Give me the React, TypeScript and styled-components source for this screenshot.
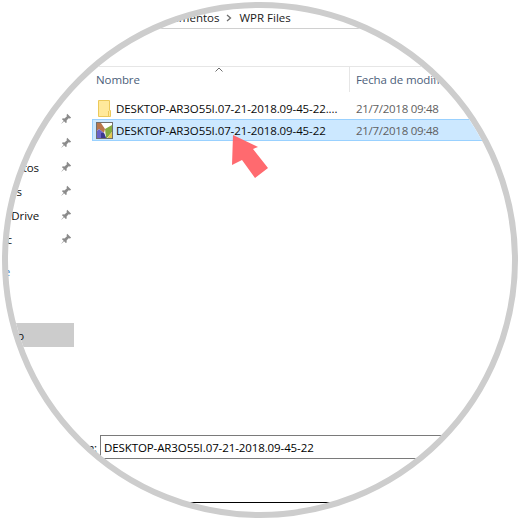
import React from "react";
import styled, { createGlobalStyle } from "styled-components";

const Global = createGlobalStyle`
  html, body { margin: 0; padding: 0; background: #fff; }
  body { font-family: "Open Sans", "Noto Sans", sans-serif; }
`;

const Page = styled.div`
  width: 520px;
  height: 520px;
  padding: 2px;
  box-sizing: border-box;
  background: #fff;
`;

const Lens = styled.div`
  position: relative;
  width: 516px;
  height: 516px;
  box-sizing: border-box;
  border: 6px solid #cdcdcd;
  border-radius: 50%;
  overflow: hidden;
  background: #fff;
  display: flex;
  flex-direction: column;
  font-size: 11.5px;
  letter-spacing: -0.1px;
  color: #000;
  white-space: nowrap;
`;

const AddressBar = styled.div`
  height: 20px;
  box-sizing: content-box;
  border-bottom: 1px solid #d0d0d0;
  display: flex;
  align-items: center;
  padding-left: 143px;
  gap: 7px;
  color: #1a1a1a;
  letter-spacing: 0;
  line-height: 18px;
  flex: none;
`;

const Crumb = styled.span`
  margin-top: 0;
`;

const Chevron = styled.svg`
  width: 6px;
  height: 8px;
  flex: none;
`;

const Toolbar = styled.div`
  height: 37px;
  flex: none;
`;

const Content = styled.div`
  height: 369px;
  display: flex;
  flex: none;
`;

const Sidebar = styled.div`
  width: 66px;
  flex: none;
  display: flex;
  flex-direction: column;
  padding-top: 41px;
`;

const NavItem = styled.div<{ $selected?: boolean; $blue?: boolean; $gap?: number }>`
  height: 24px;
  flex: none;
  box-sizing: border-box;
  margin-top: ${(p) => p.$gap ?? 0}px;
  display: flex;
  align-items: center;
  justify-content: space-between;
  padding-right: 2px;
  background: ${(p) => (p.$selected ? "#cccccc" : "transparent")};
  color: ${(p) => (p.$blue ? "#1f5fa8" : "#111")};
`;

const NavLabel = styled.span<{ $end: number }>`
  width: ${(p) => p.$end}px;
  display: flex;
  justify-content: flex-end;
`;

const PinIcon = styled.svg`
  width: 12px;
  height: 12px;
  flex: none;
`;

const Main = styled.div`
  flex: 1;
  margin-left: 18px;
  display: flex;
  flex-direction: column;
  min-width: 0;
`;

const HeaderRow = styled.div`
  position: relative;
  height: 26px;
  border-top: 1px solid #e6e6e6;
  box-sizing: border-box;
  display: grid;
  grid-template-columns: 257px 1fr;
  align-items: center;
  color: #4c607a;
  flex: none;
`;

const HeaderName = styled.div`
  padding-left: 4px;
`;

const HeaderDate = styled.div`
  height: 100%;
  border-left: 1px solid #e6e6e6;
  padding-left: 6px;
  display: flex;
  align-items: center;
  box-sizing: border-box;
`;

const SortCaret = styled.svg`
  position: absolute;
  left: 123px;
  top: 0;
  width: 8px;
  height: 5px;
`;

const FileList = styled.div`
  padding-top: 5px;
  display: flex;
  flex-direction: column;
`;

const FileRow = styled.div<{ $selected?: boolean }>`
  height: 22px;
  box-sizing: border-box;
  display: grid;
  grid-template-columns: 257px 1fr;
  align-items: center;
  border: 1px solid ${(p) => (p.$selected ? "#99d1ff" : "transparent")};
  background: ${(p) => (p.$selected ? "#cce8ff" : "transparent")};
  margin-right: -10px;
`;

const NameCell = styled.div`
  display: flex;
  align-items: center;
  padding-left: 3px;
  gap: 3px;
  color: #0a0a0a;
`;

const DateCell = styled.div`
  padding-left: 6px;
  color: #5f5f5f;
  letter-spacing: -0.28px;
`;

const FileIcon = styled.svg`
  width: 17px;
  height: 17px;
  flex: none;
`;

const FileNameBar = styled.div`
  height: 24px;
  display: flex;
  align-items: center;
  flex: none;
`;

const FileNameLabel = styled.div`
  width: 92px;
  flex: none;
  text-align: right;
  padding-right: 3px;
  box-sizing: border-box;
`;

const FileNameInput = styled.div`
  flex: 1;
  height: 24px;
  box-sizing: border-box;
  border: 1px solid #7a7a7a;
  margin-right: -10px;
  padding-left: 3px;
  display: flex;
  align-items: center;
`;

const Footer = styled.div`
  margin-top: 43px;
  border-top: 1px solid #000;
  flex: none;
`;

const Arrow = styled.svg`
  position: absolute;
  left: 218px;
  top: 121px;
  width: 50px;
  height: 50px;
  pointer-events: none;
`;

const Pin = () => (
  <PinIcon viewBox="0 0 12 12">
    <path d="M7.2 0.8 L11.2 4.8 L9.9 5.4 L8.6 5.2 L6.6 7.6 L6.7 9.4 L5.8 10 L2 6.2 L2.7 5.3 L4.4 5.4 L6.8 3.4 L6.6 2.1 Z" fill="#8b8b8b" />
    <path d="M3.4 8 L0.8 11.2 L4 8.6 Z" fill="#8b8b8b" />
  </PinIcon>
);

const FolderIcon = () => (
  <FileIcon viewBox="0 0 17 17">
    <path d="M2.5 0.5 H13.5 V10.5 H14.5 V16.5 H2.5 Z" fill="#ffe99b" stroke="#ecc95a" />
    <path d="M12.5 11 V16" stroke="#ecc95a" />
  </FileIcon>
);

const ChartIcon = () => (
  <FileIcon viewBox="0 0 17 17">
    <rect x="0.5" y="0.5" width="16" height="16" fill="#fff" stroke="#6f6f6f" />
    <path d="M1 1 H5 L9 7 L8 11 L3 7 L1 9 Z" fill="#b9774c" />
    <path d="M1 9 L3 7 L8 11 L10 16 H1 Z" fill="#6a62c8" />
    <path d="M5 11 L8 11 L10 16 H5 Z" fill="#3c3a8f" />
    <path d="M9 7 L16 3 V10 L11 16 H10 Z" fill="#86ab3f" />
    <path d="M12 15 L16 10 V16 H12 Z" fill="#e3c54f" />
  </FileIcon>
);

const NAME = "DESKTOP-AR3O55I.07-21-2018.09-45-22";

export default function App() {
  return (
    <Page>
      <Global />
      <Lens>
        <AddressBar>
          <Crumb>Documentos</Crumb>
          <Chevron viewBox="0 0 6 8">
            <path d="M1 1 L4.5 4 L1 7" fill="none" stroke="#6d6d6d" strokeWidth="1.3" />
          </Chevron>
          <Crumb>WPR Files</Crumb>
        </AddressBar>
        <Toolbar />
        <Content>
          <Sidebar>
            <NavItem><NavLabel $end={0} /><Pin /></NavItem>
            <NavItem><NavLabel $end={0} /><Pin /></NavItem>
            <NavItem><NavLabel $end={31}>Documentos</NavLabel><Pin /></NavItem>
            <NavItem><NavLabel $end={14}>Imágenes</NavLabel><Pin /></NavItem>
            <NavItem><NavLabel $end={31}>Drive</NavLabel><Pin /></NavItem>
            <NavItem><NavLabel $end={4}>Solvetic</NavLabel><Pin /></NavItem>
            <NavItem $blue $gap={8}><NavLabel $end={2}>OneDrive</NavLabel></NavItem>
            <NavItem $blue $gap={8}><NavLabel $end={2}>Red</NavLabel></NavItem>
            <NavItem $selected $gap={8}><NavLabel $end={16}>Este equipo</NavLabel></NavItem>
          </Sidebar>
          <Main>
            <HeaderRow>
              <SortCaret viewBox="0 0 8 5">
                <path d="M0.5 4.5 L4 1 L7.5 4.5" fill="none" stroke="#6d6d6d" />
              </SortCaret>
              <HeaderName>Nombre</HeaderName>
              <HeaderDate>Fecha de modificación</HeaderDate>
            </HeaderRow>
            <FileList>
              <FileRow>
                <NameCell><FolderIcon />{NAME}....</NameCell>
                <DateCell>21/7/2018 09:48</DateCell>
              </FileRow>
              <FileRow $selected>
                <NameCell><ChartIcon />{NAME}</NameCell>
                <DateCell>21/7/2018 09:48</DateCell>
              </FileRow>
            </FileList>
          </Main>
        </Content>
        <FileNameBar>
          <FileNameLabel>Nombre:</FileNameLabel>
          <FileNameInput>{NAME}</FileNameInput>
        </FileNameBar>
        <Footer />
        <Arrow viewBox="0 0 50 50">
          <path d="M7 6 L32 18 L27 20 L42 39 L29 49 L16 31 L6 36 Z" fill="#ff6469" fillOpacity="0.96" />
        </Arrow>
      </Lens>
    </Page>
  );
}
